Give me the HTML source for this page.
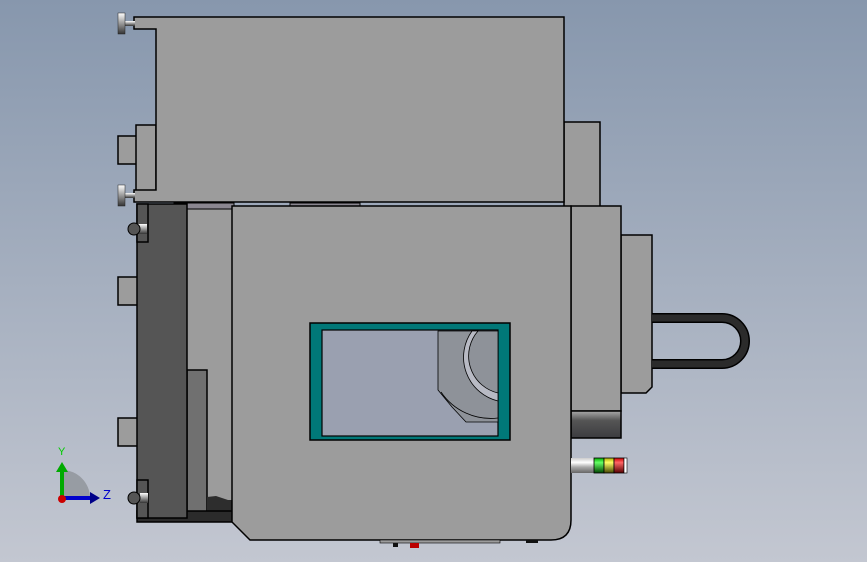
<!DOCTYPE html>
<html><head><style>html,body{margin:0;padding:0}body{width:867px;height:562px;overflow:hidden;background:linear-gradient(#8797ad,#c3c7d1)}</style></head>
<body>
<svg width="867" height="562" viewBox="0 0 867 562" xmlns="http://www.w3.org/2000/svg" style="position:absolute;left:0;top:0">
<defs>
<linearGradient id="cyl" x1="0" y1="0" x2="0" y2="1"><stop offset="0" stop-color="#aaa"/><stop offset=".35" stop-color="#555"/><stop offset="1" stop-color="#3c3c40"/></linearGradient>
<linearGradient id="knob" x1="0" y1="0" x2="0" y2="1"><stop offset="0" stop-color="#fff"/><stop offset=".5" stop-color="#999"/><stop offset="1" stop-color="#333"/></linearGradient>
<linearGradient id="wh" x1="0" y1="0" x2="0" y2="1"><stop offset="0" stop-color="#ccc"/><stop offset=".3" stop-color="#fff"/><stop offset=".6" stop-color="#aaa"/><stop offset="1" stop-color="#666"/></linearGradient>
<linearGradient id="gr" x1="0" y1="0" x2="0" y2="1"><stop offset="0" stop-color="#0a0"/><stop offset=".3" stop-color="#6f6"/><stop offset="1" stop-color="#040"/></linearGradient>
<linearGradient id="ye" x1="0" y1="0" x2="0" y2="1"><stop offset="0" stop-color="#aa0"/><stop offset=".3" stop-color="#ff6"/><stop offset="1" stop-color="#440"/></linearGradient>
<linearGradient id="re" x1="0" y1="0" x2="0" y2="1"><stop offset="0" stop-color="#c00"/><stop offset=".3" stop-color="#f66"/><stop offset="1" stop-color="#500"/></linearGradient>
</defs>
<g stroke="#000" stroke-width="1.5">
<!-- right upper block -->
<rect x="564" y="122" width="36" height="86" fill="#9c9c9c"/>
<!-- left small blocks -->
<rect x="118" y="136" width="19" height="28" fill="#9c9c9c"/>
<rect x="136" y="125" width="20" height="66" fill="#9c9c9c"/>
<rect x="118" y="277" width="20" height="28" fill="#9c9c9c"/>
<rect x="118" y="418" width="20" height="28" fill="#9c9c9c"/>
<!-- middle light area -->
<rect x="186" y="206" width="48" height="306" fill="#9c9c9c"/>
<rect x="174" y="203" width="60" height="6" fill="#8a8690" stroke-width="1"/>
<rect x="290" y="203" width="70" height="4" fill="#8a8690" stroke-width="1"/>
<rect x="187" y="370" width="20" height="142" fill="#707070"/>
<path d="M207 512 L207 497 L216 496 L228 500 L233 500 L233 512 Z" fill="#2d2d2d" stroke="none"/>
<!-- black base -->
<rect x="137" y="511" width="96" height="11" fill="#2b2b2b"/>
<!-- dark panel -->
<rect x="137" y="204" width="50" height="314" fill="#555"/>
<rect x="137" y="204" width="11" height="38" fill="#555"/>
<rect x="137" y="480" width="11" height="38" fill="#555"/>
<!-- top box -->
<path d="M134 17 L564 17 L564 202 L134 202 L134 190 L156 190 L156 29 L134 29 Z" fill="#9c9c9c"/>
<!-- right lower -->
<path d="M621 235 L652 235 L652 387 L646 393 L621 393 Z" fill="#9c9c9c"/>
<rect x="571" y="206" width="50" height="205" fill="#9c9c9c"/>
<rect x="571" y="411" width="50" height="27" fill="url(#cyl)"/>
<!-- handle -->
<path d="M652 318 L722 318 A23 23 0 0 1 722 364 L652 364" fill="none" stroke="#000" stroke-width="10"/>
<path d="M652 318 L722 318 A23 23 0 0 1 722 364 L652 364" fill="none" stroke="#2b2b2b" stroke-width="7"/>
<!-- main body -->
<path d="M232 206 L571 206 L571 520 Q571 540 551 540 L250 540 L232 522 Z" fill="#9c9c9c"/>
<!-- window -->
<rect x="310" y="323" width="200" height="117" fill="#007878"/>
<rect x="322" y="330" width="176" height="106" fill="#9aa0b0" stroke-width="1.2"/>
<path d="M438 331 L498 331 L498 422 L466 422 L452 407 L438 390 Z" fill="#8e9299" stroke-width=".8"/>
<path d="M472 331 A45 45 0 0 0 498 401 L498 393 A38 38 0 0 1 478 331 Z" fill="#b8bac4" stroke-width=".8"/>
<path d="M441 392 A60 60 0 0 0 498 418" fill="none" stroke-width=".8"/>
</g>
<!-- knobs -->
<g>
<rect x="124" y="21" width="11" height="5" fill="url(#knob)"/><rect x="118" y="13" width="7" height="21" fill="url(#knob)" stroke="#222" stroke-width=".5"/>
<rect x="124" y="193" width="11" height="5" fill="url(#knob)"/><rect x="118" y="185" width="7" height="21" fill="url(#knob)" stroke="#222" stroke-width=".5"/>
<rect x="137" y="224" width="10" height="10" fill="url(#knob)"/><circle cx="134" cy="229" r="6" fill="#555" stroke="#000"/>
<rect x="140" y="493" width="8" height="10" fill="url(#knob)"/><circle cx="134" cy="498" r="6" fill="#555" stroke="#000"/>
</g>
<!-- indicator -->
<rect x="571" y="458" width="24" height="15" fill="url(#wh)"/>
<rect x="594" y="458" width="10" height="15" fill="url(#gr)" stroke="#000" stroke-width=".8"/>
<rect x="604" y="458" width="10" height="15" fill="url(#ye)" stroke="#000" stroke-width=".8"/>
<rect x="614" y="458" width="10" height="15" fill="url(#re)" stroke="#000" stroke-width=".8"/>
<rect x="624" y="458" width="3" height="15" fill="#fff" stroke="#000" stroke-width=".6"/>
<!-- bottom bits -->
<rect x="380" y="540" width="120" height="3" fill="#9c9c9c" stroke="#000" stroke-width=".6"/>
<rect x="393" y="543" width="5" height="4" fill="#111"/>
<rect x="410" y="543" width="9" height="5" fill="#b00"/>
<rect x="526" y="540" width="12" height="3" fill="#111"/>
<!-- triad -->
<path d="M62 498 L62 470 A28 28 0 0 1 90 498 Z" fill="#8e9299" opacity=".8"/>
<line x1="62" y1="498" x2="62" y2="470" stroke="#0a0" stroke-width="4"/>
<path d="M56 472 L62 462 L68 472 Z" fill="#0a0"/>
<line x1="62" y1="498" x2="92" y2="498" stroke="#00c" stroke-width="4"/>
<path d="M90 492 L100 498 L90 504 Z" fill="#008"/>
<circle cx="62" cy="499" r="4" fill="#c00"/>
<text x="58" y="455" font-family="Liberation Sans, sans-serif" font-size="11" fill="#0c0">Y</text>
<text x="103" y="499" font-family="Liberation Sans, sans-serif" font-size="13" fill="#00c">Z</text>
</svg>
</body></html>
